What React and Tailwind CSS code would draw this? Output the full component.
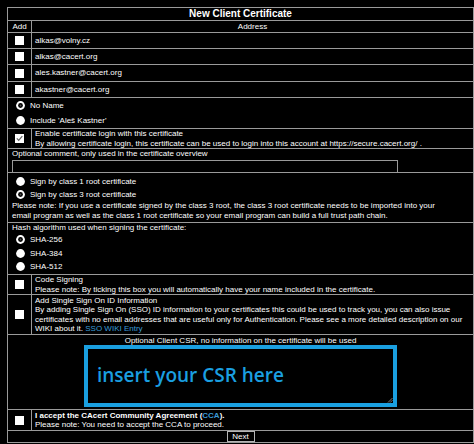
import React from "react";

const LINE = "border-[#9a9a9a]";

function Radio({ checked }) {
  return (
    <svg width="9" height="9" viewBox="0 0 9 9" className="shrink-0">
      <circle cx="4.5" cy="4.5" r="4.4" fill="#ffffff" />
      {checked && <circle cx="4.5" cy="4.5" r="2.4" fill="#000000" />}
      {checked && <circle cx="4.5" cy="4.5" r="0.9" fill="#555555" />}
    </svg>
  );
}

function Check({ checked }) {
  return (
    <div className="w-[9px] h-[9px] bg-white flex items-center justify-center shrink-0">
      {checked && (
        <svg width="9" height="9" viewBox="0 0 9 9">
          <path d="M1.8 4.4 L3.7 6.4 L7.3 2.2" stroke="#666666" strokeWidth="1.2" fill="none" />
        </svg>
      )}
    </div>
  );
}

function SplitRow({ h, checked, children, last }) {
  return (
    <div className={`flex border-b ${LINE} ${h}`}>
      <div className={`w-[24px] shrink-0 border-r ${LINE} flex items-center justify-center`}>
        <Check checked={checked} />
      </div>
      <div className="flex-1 pl-[3px] flex flex-col justify-center">{children}</div>
    </div>
  );
}

function RadioLine({ checked, label, h }) {
  return (
    <div className={`flex items-center pl-[8px] gap-[5px] ${h}`}>
      <Radio checked={checked} />
      <span>{label}</span>
    </div>
  );
}

export default function App() {
  return (
    <div className="w-[474px] h-[444px] bg-black overflow-hidden pt-[7px] pl-[7px] text-white font-['Liberation_Sans',Arial,sans-serif] text-[8px] leading-[9.5px]">
      <div className={`w-[467px] border-l border-r border-t ${LINE}`}>
        {/* Title */}
        <div className={`h-[13px] border-b ${LINE} text-center font-bold text-[10px] leading-[12px]`}>
          New Client Certificate
        </div>
        {/* Header */}
        <div className={`flex h-[12px] border-b ${LINE} leading-[11px]`}>
          <div className={`w-[24px] shrink-0 border-r ${LINE} text-center`}>Add</div>
          <div className="flex-1 text-center">Address</div>
        </div>
        {/* Emails */}
        <SplitRow h="h-[16px]">alkas@volny.cz</SplitRow>
        <SplitRow h="h-[16px]">alkas@cacert.org</SplitRow>
        <SplitRow h="h-[17px]">ales.kastner@cacert.org</SplitRow>
        <SplitRow h="h-[16px]">akastner@cacert.org</SplitRow>
        {/* Name radios */}
        <div className={`h-[31px] border-b ${LINE} flex flex-col`}>
          <RadioLine checked label="No Name" h="h-[15px]" />
          <RadioLine label="Include 'Aleš Kastner'" h="h-[15px]" />
        </div>
        {/* Enable login */}
        <SplitRow h="h-[20px]" checked>
          <div>Enable certificate login with this certificate</div>
          <div className="whitespace-nowrap">
            By allowing certificate login, this certificate can be used to login into this account at https://secure.cacert.org/ .
          </div>
        </SplitRow>
        {/* Optional comment */}
        <div className={`h-[24px] border-b ${LINE} pl-[4px] flex flex-col`}>
          <div className="h-[11px] leading-[10px]">Optional comment, only used in the certificate overview</div>
          <div className={`w-[386px] h-[12px] border-l border-r border-t ${LINE} bg-black`}></div>
        </div>
        {/* Sign by class */}
        <div className={`h-[50px] border-b ${LINE} pt-[2px] flex flex-col`}>
          <RadioLine label="Sign by class 1 root certificate" h="h-[13px]" />
          <RadioLine checked label="Sign by class 3 root certificate" h="h-[13px]" />
          <div className="pl-[4px] whitespace-nowrap">
            Please note: If you use a certificate signed by the class 3 root, the class 3 root certificate needs to be imported into your
            <br />
            email program as well as the class 1 root certificate so your email program can build a full trust path chain.
          </div>
        </div>
        {/* Hash */}
        <div className={`h-[52px] border-b ${LINE} flex flex-col`}>
          <div className="pl-[4px] h-[10px] leading-[9px]">Hash algorithm used when signing the certificate:</div>
          <RadioLine checked label="SHA-256" h="h-[13.5px]" />
          <RadioLine label="SHA-384" h="h-[13.5px]" />
          <RadioLine label="SHA-512" h="h-[13.5px]" />
        </div>
        {/* Code signing */}
        <SplitRow h="h-[20px]">
          <div>Code Signing</div>
          <div className="whitespace-nowrap">
            Please note: By ticking this box you will automatically have your name included in the certificate.
          </div>
        </SplitRow>
        {/* SSO */}
        <SplitRow h="h-[40px]">
          <div>Add Single Sign On ID Information</div>
          <div className="whitespace-nowrap">
            By adding Single Sign On (SSO) ID information to your certificates this could be used to track you, you can also issue
          </div>
          <div className="whitespace-nowrap">
            certificates with no email addresses that are useful only for Authentication. Please see a more detailed description on our
          </div>
          <div className="whitespace-nowrap">
            WIKI about it. <span className="text-[#3a9ad6]">SSO WIKI Entry</span>
          </div>
        </SplitRow>
        {/* CSR */}
        <div className={`h-[75px] border-b ${LINE} flex flex-col items-center`}>
          <div className="h-[10px] leading-[9px] pt-[1px]">
            Optional Client CSR, no information on the certificate will be used
          </div>
          <div className="relative w-[313px] h-[62px] border-[4px] border-[#1a9fe0] bg-black flex items-center pl-[9px]">
            <span className="font-['Open_Sans',sans-serif] font-semibold text-[19px] leading-[20px] text-[#1a9fe0] -mt-[2px]">
              insert your CSR here
            </span>
            <svg width="6" height="6" viewBox="0 0 6 6" className="absolute right-[0px] bottom-[0px]">
              <path d="M5.5 1 L1 5.5 M5.5 3.2 L3.2 5.5" stroke="#9a9a9a" strokeWidth="0.8" />
            </svg>
          </div>
        </div>
        {/* Accept */}
        <SplitRow h="h-[21px]">
          <div className="font-bold whitespace-nowrap">
            I accept the CAcert Community Agreement (<span className="text-[#3a9ad6]">CCA</span>).
          </div>
          <div>Please note: You need to accept the CCA to proceed.</div>
        </SplitRow>
        {/* Next */}
        <div className={`h-[12px] border-b ${LINE} flex justify-center items-start`}>
          <div className="w-[28px] h-[11px] border border-[#b5b5b5] bg-black text-center leading-[9px]">Next</div>
        </div>
      </div>
    </div>
  );
}
